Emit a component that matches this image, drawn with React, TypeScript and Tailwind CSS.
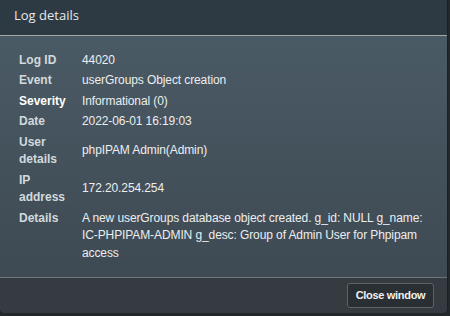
import React from 'react';

const rows: { label: string; value: string; strong?: boolean }[] = [
  { label: 'Log ID', value: '44020' },
  { label: 'Event', value: 'userGroups Object creation' },
  { label: 'Severity', value: 'Informational (0)', strong: true },
  { label: 'Date', value: '2022-06-01 16:19:03' },
  { label: 'User details', value: 'phpIPAM Admin(Admin)' },
  { label: 'IP address', value: '172.20.254.254' },
  {
    label: 'Details',
    value:
      'A new userGroups database object created. g_id: NULL g_name: IC-PHPIPAM-ADMIN g_desc: Group of Admin User for Phpipam access',
  },
];

const App: React.FC = () => {
  return (
    <div className="w-[450px] h-[316px] bg-[#22282c] overflow-hidden">
      <div className="w-[448px] h-[313px] flex flex-col rounded-b-[5px] overflow-hidden border-r border-[#1b2024] bg-[#3f4c55]">
        <div className="h-[36px] shrink-0 bg-[#2d3a44] border-b border-[#a3a6a7] px-[14px] pt-[7px]">
          <h3 className="text-[13px] leading-[16px] text-[#e6e9eb] font-['Open_Sans',sans-serif]">Log details</h3>
        </div>

        <div className="flex-1 bg-gradient-to-b from-[#4a5a65] to-[#3e4a53] pt-[14px] pl-[19px] pr-[16px]">
          <table className="text-[12px] leading-[17.5px] font-['Liberation_Sans',Arial,sans-serif] border-collapse">
            <tbody>
              {rows.map((r) => (
                <tr key={r.label}>
                  <th
                    className={`w-[63px] pr-[6px] py-[1.5px] text-left align-top ${
                      r.strong ? 'font-bold text-white' : 'font-semibold text-[#d3d9dc]'
                    }`}
                  >
                    {r.label}
                  </th>
                  <td className="py-[1.5px] align-middle text-[#eceeef] tracking-[-0.1px]">{r.value}</td>
                </tr>
              ))}
            </tbody>
          </table>
        </div>

        <div className="h-[36px] shrink-0 bg-[#353b40] border-t border-[#70767a] flex items-center justify-end pr-[13px]">
          <button className="h-[25px] w-[87px] rounded-[3px] border border-[#5d6368] bg-[#2a2f33] text-[11px] font-bold tracking-[-0.3px] text-[#eef0f1] font-['Liberation_Sans',Arial,sans-serif]">
            Close window
          </button>
        </div>
      </div>
    </div>
  );
};

export default App;
